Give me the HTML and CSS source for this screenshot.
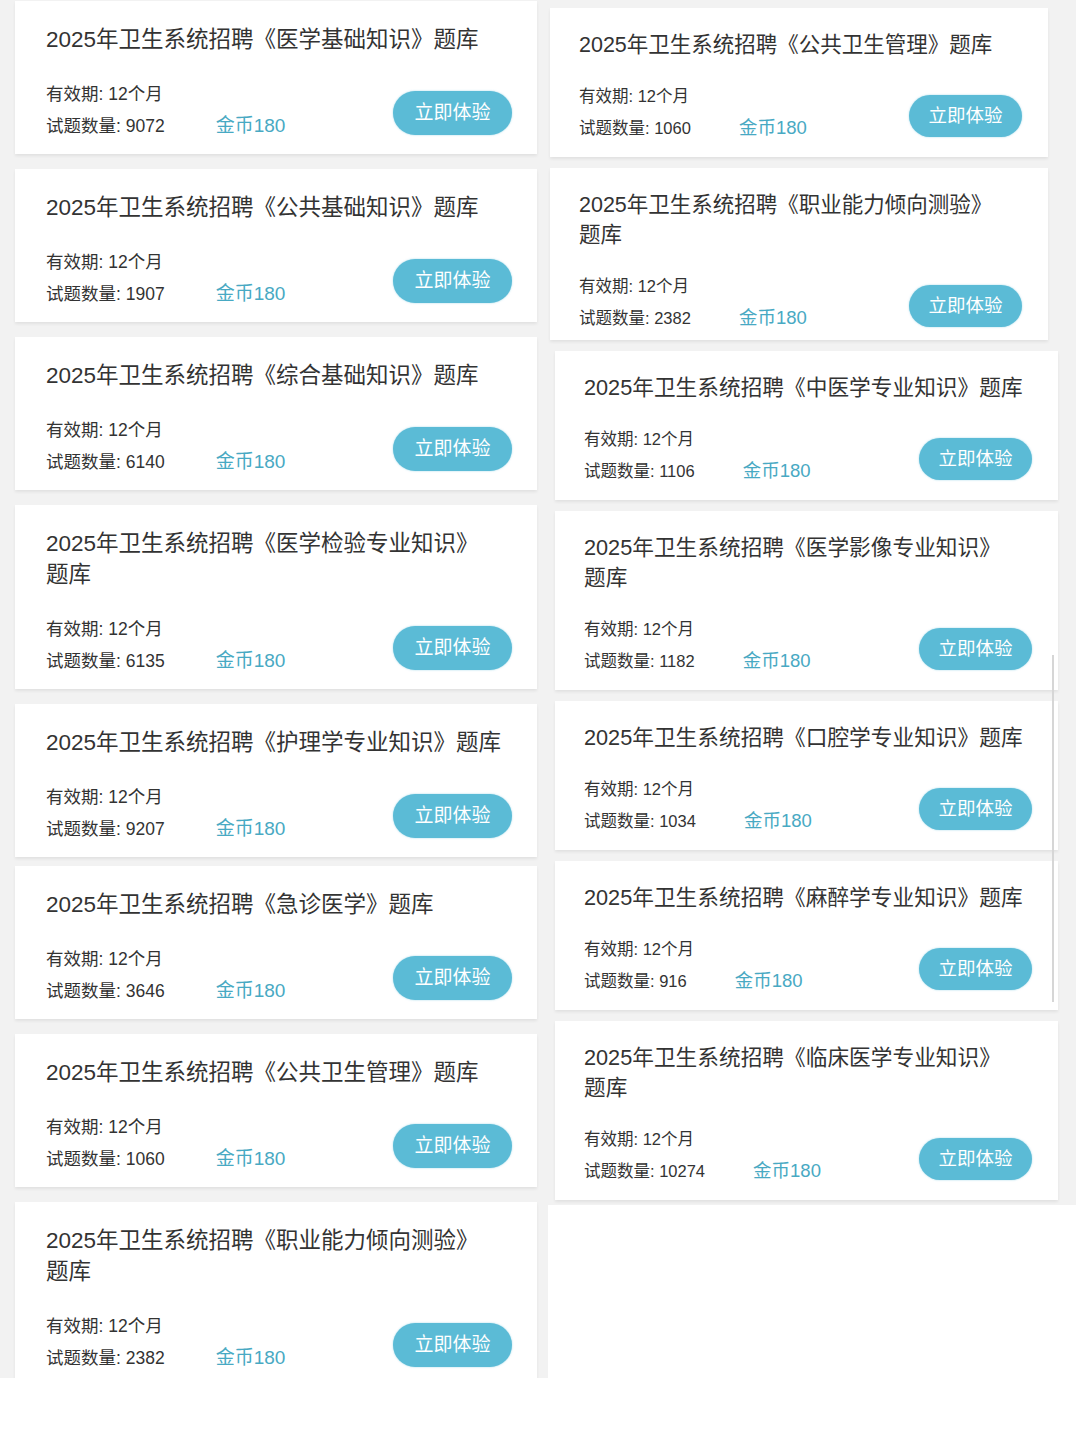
FILE: index.html
```html
<!DOCTYPE html>
<html lang="zh-CN">
<head>
<meta charset="utf-8">
<title>题库</title>
<link rel="stylesheet" href="styles.css">
</head>
<body>
<div class="page">
  <div class="col col-left">
    <div class="card">
      <div class="title">2025年卫生系统招聘《医学基础知识》题库</div>
      <div class="bottom">
        <div class="meta">
          <div class="line">有效期: 12个月</div>
          <div class="line">试题数量: 9072<span class="coin">金币180</span></div>
        </div>
        <div class="btn">立即体验</div>
      </div>
    </div>
    <div class="card">
      <div class="title">2025年卫生系统招聘《公共基础知识》题库</div>
      <div class="bottom">
        <div class="meta">
          <div class="line">有效期: 12个月</div>
          <div class="line">试题数量: 1907<span class="coin">金币180</span></div>
        </div>
        <div class="btn">立即体验</div>
      </div>
    </div>
    <div class="card">
      <div class="title">2025年卫生系统招聘《综合基础知识》题库</div>
      <div class="bottom">
        <div class="meta">
          <div class="line">有效期: 12个月</div>
          <div class="line">试题数量: 6140<span class="coin">金币180</span></div>
        </div>
        <div class="btn">立即体验</div>
      </div>
    </div>
    <div class="card">
      <div class="title">2025年卫生系统招聘《医学检验专业知识》<br>题库</div>
      <div class="bottom">
        <div class="meta">
          <div class="line">有效期: 12个月</div>
          <div class="line">试题数量: 6135<span class="coin">金币180</span></div>
        </div>
        <div class="btn">立即体验</div>
      </div>
    </div>
    <div class="card">
      <div class="title">2025年卫生系统招聘《护理学专业知识》题库</div>
      <div class="bottom">
        <div class="meta">
          <div class="line">有效期: 12个月</div>
          <div class="line">试题数量: 9207<span class="coin">金币180</span></div>
        </div>
        <div class="btn">立即体验</div>
      </div>
    </div>
    <div class="card card-seam">
      <div class="title">2025年卫生系统招聘《急诊医学》题库</div>
      <div class="bottom">
        <div class="meta">
          <div class="line">有效期: 12个月</div>
          <div class="line">试题数量: 3646<span class="coin">金币180</span></div>
        </div>
        <div class="btn">立即体验</div>
      </div>
    </div>
    <div class="card">
      <div class="title">2025年卫生系统招聘《公共卫生管理》题库</div>
      <div class="bottom">
        <div class="meta">
          <div class="line">有效期: 12个月</div>
          <div class="line">试题数量: 1060<span class="coin">金币180</span></div>
        </div>
        <div class="btn">立即体验</div>
      </div>
    </div>
    <div class="card">
      <div class="title">2025年卫生系统招聘《职业能力倾向测验》<br>题库</div>
      <div class="bottom">
        <div class="meta">
          <div class="line">有效期: 12个月</div>
          <div class="line">试题数量: 2382<span class="coin">金币180</span></div>
        </div>
        <div class="btn">立即体验</div>
      </div>
    </div>
  </div>

  <div class="col col-right">
    <div class="card card-r">
      <div class="title">2025年卫生系统招聘《公共卫生管理》题库</div>
      <div class="bottom">
        <div class="meta">
          <div class="line">有效期: 12个月</div>
          <div class="line">试题数量: 1060<span class="coin">金币180</span></div>
        </div>
        <div class="btn">立即体验</div>
      </div>
    </div>
    <div class="card card-r card-cut">
      <div class="title">2025年卫生系统招聘《职业能力倾向测验》<br>题库</div>
      <div class="bottom">
        <div class="meta">
          <div class="line">有效期: 12个月</div>
          <div class="line">试题数量: 2382<span class="coin">金币180</span></div>
        </div>
        <div class="btn">立即体验</div>
      </div>
    </div>
    <div class="card card-r card-shift">
      <div class="title">2025年卫生系统招聘《中医学专业知识》题库</div>
      <div class="bottom">
        <div class="meta">
          <div class="line">有效期: 12个月</div>
          <div class="line">试题数量: 1106<span class="coin">金币180</span></div>
        </div>
        <div class="btn">立即体验</div>
      </div>
    </div>
    <div class="card card-r card-shift">
      <div class="title">2025年卫生系统招聘《医学影像专业知识》<br>题库</div>
      <div class="bottom">
        <div class="meta">
          <div class="line">有效期: 12个月</div>
          <div class="line">试题数量: 1182<span class="coin">金币180</span></div>
        </div>
        <div class="btn">立即体验</div>
      </div>
    </div>
    <div class="card card-r card-shift">
      <div class="title">2025年卫生系统招聘《口腔学专业知识》题库</div>
      <div class="bottom">
        <div class="meta">
          <div class="line">有效期: 12个月</div>
          <div class="line">试题数量: 1034<span class="coin">金币180</span></div>
        </div>
        <div class="btn">立即体验</div>
      </div>
    </div>
    <div class="card card-r card-shift">
      <div class="title">2025年卫生系统招聘《麻醉学专业知识》题库</div>
      <div class="bottom">
        <div class="meta">
          <div class="line">有效期: 12个月</div>
          <div class="line">试题数量: 916<span class="coin">金币180</span></div>
        </div>
        <div class="btn">立即体验</div>
      </div>
    </div>
    <div class="card card-r card-shift">
      <div class="title">2025年卫生系统招聘《临床医学专业知识》<br>题库</div>
      <div class="bottom">
        <div class="meta">
          <div class="line">有效期: 12个月</div>
          <div class="line">试题数量: 10274<span class="coin">金币180</span></div>
        </div>
        <div class="btn">立即体验</div>
      </div>
    </div>
    <div class="scrollbar"></div>
  </div>
</div>
</body>
</html>
```

FILE: styles.css
```css
html, body {
  margin: 0;
  padding: 0;
  background: #ffffff;
}

body {
  font-family: "Liberation Sans", "Noto Sans CJK SC", sans-serif;
  color: #333333;
}

.page {
  display: flex;
  align-items: flex-start;
  width: 1080px;
}

.col {
  display: flex;
  flex-direction: column;
  background: #f2f2f2;
  box-sizing: border-box;
}

.col-left {
  width: 548px;
  height: 1378px;
  overflow: hidden;
  padding: 1px 0 0 15px;
  gap: 15px;
}

.col-right {
  position: relative;
  width: 528px;
  padding: 8px 0 5px 2px;
  gap: 11px;
}

.card {
  background: #ffffff;
  width: 522px;
  box-sizing: border-box;
  padding: 23px 25px 12px 31px;
  box-shadow: 0 2px 3px rgba(0, 0, 0, 0.07);
  flex-shrink: 0;
}

.card-seam {
  margin-top: -6px;
}

.title {
  font-size: 22.5px;
  line-height: 31px;
  color: #333333;
}

.bottom {
  display: flex;
  align-items: center;
  justify-content: space-between;
  margin-top: 23px;
}

.line {
  font-size: 17.5px;
  line-height: 32px;
  color: #333333;
  white-space: nowrap;
}

.coin {
  margin-left: 51px;
  font-size: 19px;
  color: #48a9c3;
}

.btn {
  margin-top: 6px;
  width: 119px;
  height: 44px;
  border-radius: 22px;
  background: #5bbbd6;
  color: #ffffff;
  font-size: 19px;
  line-height: 44px;
  text-align: center;
  box-shadow: 0 0 2px rgba(91, 187, 214, 0.6);
}

/* right column cards */
.card-r {
  width: 498px;
  padding: 22px 26px 13px 29px;
}

.card-r .title {
  font-size: 21.5px;
  line-height: 30px;
}

.card-r .bottom {
  margin-top: 21px;
}

.card-r .line {
  font-size: 16.5px;
  line-height: 31px;
}

.card-r .coin {
  margin-left: 48px;
  font-size: 18.5px;
}

.card-r .btn {
  width: 113px;
  height: 42px;
  line-height: 42px;
  border-radius: 21px;
  font-size: 18.5px;
}

.card-cut {
  padding-bottom: 6px;
}

.card-shift {
  margin-left: 5px;
  width: 503px;
}

.card-shift .title {
  font-size: 21.7px;
}

.scrollbar {
  position: absolute;
  left: 504px;
  top: 655px;
  width: 2px;
  height: 347px;
  background: #d6d6d6;
}
```
